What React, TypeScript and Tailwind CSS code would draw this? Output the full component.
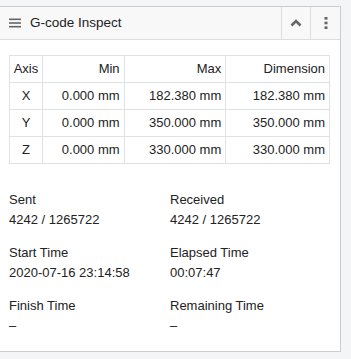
import React from "react";

const rows = [
  ["X", "0.000 mm", "182.380 mm", "182.380 mm"],
  ["Y", "0.000 mm", "350.000 mm", "350.000 mm"],
  ["Z", "0.000 mm", "330.000 mm", "330.000 mm"],
];

const stats: [string, string, string, string][] = [
  ["Sent", "4242 / 1265722", "Received", "4242 / 1265722"],
  ["Start Time", "2020-07-16 23:14:58", "Elapsed Time", "00:07:47"],
  ["Finish Time", "–", "Remaining Time", "–"],
];

export default function App() {
  return (
    <div
      className="w-[351px] h-[359px] bg-[#f4f5f7] pt-[6px] text-[#222]"
      style={{ fontFamily: '"Liberation Sans", Arial, sans-serif' }}
    >
      <div className="w-[341px] h-[346px] bg-white border-t border-r border-b border-[#ccc] flex flex-col">
        <div className="h-[33px] bg-[#f8f8f8] border-b border-[#ddd] flex items-stretch">
          <div className="flex items-center flex-1 pl-[9px]">
            <svg width="12" height="10" viewBox="0 0 12 10" className="mr-[9px]">
              <rect x="0" y="0.5" width="12" height="1.6" fill="#666" />
              <rect x="0" y="4.2" width="12" height="1.6" fill="#666" />
              <rect x="0" y="7.9" width="12" height="1.6" fill="#666" />
            </svg>
            <span className="text-[13.5px] leading-none">G-code Inspect</span>
          </div>
          <div className="w-[29px] border-l border-[#ddd] flex items-center justify-center">
            <svg width="12" height="8" viewBox="0 0 12 8">
              <path d="M1.5 6.5 L6 2 L10.5 6.5" stroke="#666" strokeWidth="2.6" fill="none" />
            </svg>
          </div>
          <div className="w-[30px] border-l border-[#ddd] flex items-center justify-center">
            <svg width="4" height="12" viewBox="0 0 4 12">
              <rect x="0.5" y="0" width="3" height="2.6" fill="#666" />
              <rect x="0.5" y="4.7" width="3" height="2.6" fill="#666" />
              <rect x="0.5" y="9.4" width="3" height="2.6" fill="#666" />
            </svg>
          </div>
        </div>
        <div className="px-[9px] pt-[15px]">
          <table className="border-collapse text-[13px] w-[321px]">
            <thead>
              <tr className="h-[27px]">
                <th className="border border-[#dee2e6] font-normal text-center w-[33px] px-0">Axis</th>
                <th className="border border-[#dee2e6] font-normal text-right w-[82px] pr-[4px]">Min</th>
                <th className="border border-[#dee2e6] font-normal text-right w-[102px] pr-[4px]">Max</th>
                <th className="border border-[#dee2e6] font-normal text-right w-[104px] pr-[4px]">Dimension</th>
              </tr>
            </thead>
            <tbody>
              {rows.map((r) => (
                <tr key={r[0]} className="h-[27px]">
                  <td className="border border-[#dee2e6] text-center">{r[0]}</td>
                  <td className="border border-[#dee2e6] text-right pr-[4px]">{r[1]}</td>
                  <td className="border border-[#dee2e6] text-right pr-[4px]">{r[2]}</td>
                  <td className="border border-[#dee2e6] text-right pr-[4px]">{r[3]}</td>
                </tr>
              ))}
            </tbody>
          </table>
        </div>
        <div className="px-[9px] pt-[26px] text-[13px] leading-[20px] text-[#222]">
          {stats.map((s) => (
            <div key={s[0]} className="grid grid-cols-[161px_1fr] mb-[13px]">
              <div>
                <div>{s[0]}</div>
                <div>{s[1]}</div>
              </div>
              <div>
                <div>{s[2]}</div>
                <div>{s[3]}</div>
              </div>
            </div>
          ))}
        </div>
      </div>
    </div>
  );
}
